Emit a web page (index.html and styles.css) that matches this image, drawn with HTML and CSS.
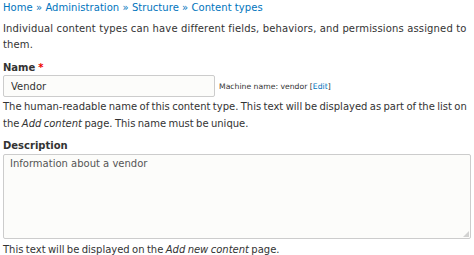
FILE: index.html
```html
<!DOCTYPE html>
<html lang="en">
  <head>
    <meta charset="UTF-8" />
    <title>Content types</title>
    <link rel="stylesheet" href="styles.css">
  </head>
  <body>
    <div class="page">
      <div class="breadcrumb">
        <a href="#">Home</a> » <a href="#">Administration</a> » <a href="#">Structure</a> » <a href="#">Content types</a>
      </div>
      <p class="intro">Individual content types can have different fields, behaviors, and permissions assigned to them.</p>
      <div class="form-item">
        <label class="label">Name<span class="required">*</span></label>
        <div class="input-row">
          <input class="text-input" type="text" value="Vendor">
          <span class="machine">Machine name: vendor [<a href="#">Edit</a>]</span>
        </div>
        <div class="help">The human-readable name of this content type. This text will be displayed as part of the list on the <em>Add content</em> page. This name must be unique.</div>
      </div>
      <div class="form-item">
        <label class="label">Description</label>
        <div class="textarea-wrap">
          <textarea class="textarea">Information about a vendor</textarea>
        </div>
        <div class="help help-bottom">This text will be displayed on the <em>Add new content</em> page.</div>
      </div>
    </div>
  </body>
</html>
```
FILE: styles.css
```css
body {
  margin: 0;
  font-family: "DejaVu Sans", sans-serif;
  font-size: 10px;
  color: #333;
  background: #fff;
}
.page {
  padding: 0 3px;
}
a {
  color: #0074bd;
  text-decoration: none;
}
.breadcrumb {
  line-height: 15px;
  color: #0074bd;
  letter-spacing: 0.05px;
}
.intro {
  margin: 6px 0 0;
  line-height: 15.5px;
  letter-spacing: 0.15px;
}
.form-item {
  margin-top: 7px;
}
.form-item + .form-item {
  margin-top: 5px;
}
.label {
  display: block;
  font-weight: bold;
  line-height: 16px;
  padding-top: 1px;
}
.required {
  color: #e00;
  margin-left: 3px;
}
.input-row {
  display: flex;
  align-items: center;
  margin-top: -1px;
}
.text-input {
  width: 212px;
  height: 22px;
  box-sizing: border-box;
  border: 1px solid #ccc;
  border-radius: 2px;
  padding: 0 7px;
  font: inherit;
  color: #333;
  background: #fcfcfa;
}
.machine {
  margin-left: 4px;
  font-size: 7.7px;
}
.help {
  line-height: 17px;
  padding-top: 1px;
  word-spacing: -0.8px;
}
.help-bottom {
  padding-top: 2px;
}
.textarea-wrap {
  position: relative;
}
.textarea {
  display: block;
  width: 100%;
  height: 85px;
  box-sizing: border-box;
  border: 1px solid #ccc;
  border-radius: 2px;
  padding: 3px 6px;
  font: inherit;
  color: #555;
  background: #fcfcfa;
  resize: none;
}
.textarea-wrap::after {
  content: "";
  position: absolute;
  right: 2px;
  bottom: 2px;
  width: 6px;
  height: 6px;
  background: radial-gradient(circle, #bbb 0.6px, transparent 0.9px) 0 0 / 2px 2px;
  clip-path: polygon(100% 0, 100% 100%, 0 100%);
}
```
